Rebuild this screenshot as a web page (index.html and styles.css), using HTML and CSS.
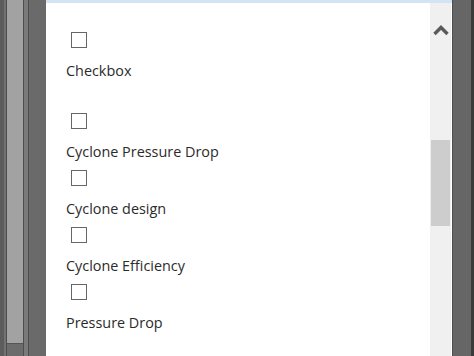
FILE: index.html
```html
<!DOCTYPE html>
<html>
<head>
<meta charset="utf-8">
<link rel="stylesheet" href="styles.css">
</head>
<body>
<div class="frame">
  <div class="left">
    <div class="band b1"></div>
    <div class="band b2"></div>
    <div class="band line"></div>
    <div class="band b3"><div class="b3-fill"></div><div class="b3-foot"></div></div>
    <div class="band line"></div>
    <div class="band b4"></div>
    <div class="band line"></div>
    <div class="band b5"></div>
  </div>
  <div class="dialog">
    <div class="content">
      <div class="item first">
        <span class="box"></span>
        <span class="label">Checkbox</span>
      </div>
      <div class="item">
        <span class="box"></span>
        <span class="label">Cyclone Pressure Drop</span>
      </div>
      <div class="item">
        <span class="box"></span>
        <span class="label">Cyclone design</span>
      </div>
      <div class="item">
        <span class="box"></span>
        <span class="label">Cyclone Efficiency</span>
      </div>
      <div class="item">
        <span class="box"></span>
        <span class="label">Pressure Drop</span>
      </div>
    </div>
    <div class="scrollbar">
      <div class="arrow">
        <svg width="16" height="12" viewBox="0 0 16 12"><polyline points="1.5,10 8,3.5 14.5,10" fill="none" stroke="#5a5a5a" stroke-width="3.4"/></svg>
      </div>
      <div class="track">
        <div class="thumb"></div>
      </div>
    </div>
  </div>
  <div class="right">
    <div class="band line"></div>
    <div class="band r1"></div>
    <div class="band r2"></div>
  </div>
</div>
</body>
</html>
```
FILE: styles.css
```css
html, body {
  margin: 0;
  padding: 0;
  width: 474px;
  height: 356px;
  overflow: hidden;
  background: #666;
}
.frame {
  display: flex;
  width: 474px;
  height: 356px;
}
.left, .right {
  display: flex;
  height: 100%;
}
.band { height: 100%; }
.line { width: 1px; background: #4e4e4e; }
.b1 { width: 4px; background: #5c5c5c; }
.b2 { width: 2px; background: #727272; }
.b3 { width: 16px; display: flex; flex-direction: column; }
.b3-fill { flex: 1; background: #a2a2a2; border-bottom: 1px solid #555; }
.b3-foot { height: 12px; background: #6c6c6c; }
.b4 { width: 4px; background: #7a7a7a; }
.b5 { width: 17px; background: #6a6a6a; }
.dialog {
  flex: 1;
  display: flex;
  background: #fff;
  border-top: 3px solid #d3e5f5;
  height: 353px;
}
.content {
  flex: 1;
  padding-top: 29px;
  padding-left: 20px;
  font-family: "Open Sans", "Segoe UI", sans-serif;
  font-size: 14.4px;
  color: #2b2b2b;
}
.item {
  display: flex;
  flex-direction: column;
  align-items: flex-start;
  gap: 13px;
  margin-bottom: 8px;
}
.item.first { margin-bottom: 32px; }
.box {
  display: block;
  width: 14px;
  height: 14px;
  border: 1px solid #666;
  margin-left: 5px;
  background: #fff;
}
.label {
  display: block;
  line-height: 20px;
}
.scrollbar {
  width: 21px;
  background: #f0f0f0;
  display: flex;
  flex-direction: column;
  margin-right: 1px;
}
.arrow {
  height: 30px;
  padding-top: 3px;
  display: flex;
  justify-content: center;
  align-items: flex-end;
}
.arrow svg { display: block; }
.track {
  flex: 1;
  padding-top: 104px;
  padding-left: 1px;
}
.thumb {
  width: 19px;
  height: 86px;
  background: #cdcdcd;
}
.r1 { width: 18px; background: #666; }
.r2 { width: 3px; background: #3a3a3a; }
```
